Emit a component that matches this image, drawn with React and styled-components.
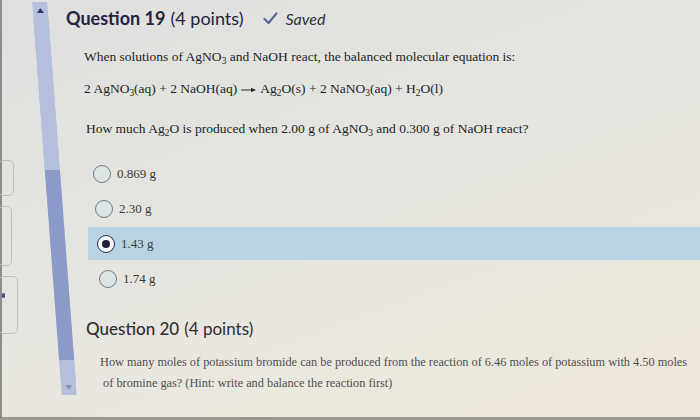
import React from "react";
import styled, { createGlobalStyle } from "styled-components";

const Global = createGlobalStyle`
  html, body { margin: 0; padding: 0; }
  body {
    width: 700px; height: 420px; overflow: hidden;
    background: linear-gradient(160deg, #dfe0de 0%, #e4e4e0 40%, #ebe8de 75%, #eee6da 100%);
    font-family: "Liberation Serif", "Times New Roman", serif;
  }
`;

const Page = styled.div`
  position: relative;
  display: flex;
  width: 700px;
  height: 420px;
  box-sizing: border-box;
  border-left: 2px solid #8c8c88;
  border-bottom: 3px solid #9a9690;
`;

const LeftRail = styled.div`
  width: 45px;
  flex: none;
  display: flex;
  flex-direction: column;
  gap: 10px;
  padding-top: 160px;
`;

const GhostBox = styled.div`
  width: ${(p) => p.w}px;
  height: ${(p) => p.h}px;
  margin-left: -4px;
  border: 1px solid #c0c0ba;
  border-radius: 5px;
  position: relative;
`;

const Dot = styled.span`
  position: absolute;
  left: 3px;
  top: 16px;
  width: 3px;
  height: 5px;
  border-radius: 2px;
  background: #3c4f9a;
`;

const Scrollbar = styled.div`
  width: 15px;
  flex: none;
  margin-top: 2px;
  height: 393px;
  transform: skewX(4.3deg);
  display: flex;
  flex-direction: column;
  background: #b6c0dd;
`;

const ArrowCell = styled.div`
  height: 16px;
  flex: none;
  display: flex;
  align-items: center;
  justify-content: center;
`;

const Track = styled.div`
  height: ${(p) => p.h}px;
  flex: none;
  background: ${(p) => p.c};
`;

const Content = styled.div`
  flex: 1;
  padding-left: 4px;
  padding-top: 5px;
  display: flex;
  flex-direction: column;
  color: #262626;
`;

const Header = styled.div`
  display: flex;
  align-items: center;
  height: 26px;
  font-family: Lato, "Open Sans", sans-serif;
  font-size: ${(p) => p.size}px;
  color: ${(p) => p.color};
  margin-left: ${(p) => p.indent || 0}px;
  margin-top: ${(p) => p.top || 0}px;
`;

const Strong = styled.span`
  font-weight: ${(p) => p.weight || 700};
  margin-right: 5px;
`;

const Light = styled.span`
  font-weight: 400;
`;

const Saved = styled.span`
  display: inline-flex;
  align-items: center;
  margin-left: 20px;
  font-size: 16px;
  font-style: italic;
  color: #2f3140;
  gap: 7px;
`;

const Para = styled.div`
  font-size: ${(p) => p.size || 13.5}px;
  line-height: ${(p) => p.lh || 20}px;
  margin-left: ${(p) => p.indent}px;
  margin-top: ${(p) => p.top}px;
  color: ${(p) => p.color || "#1e1e1e"};
`;

const Sub = styled.sub`
  font-size: 0.7em;
  line-height: 0;
  vertical-align: -0.3em;
`;

const Arrow = styled.svg`
  display: inline-block;
  vertical-align: middle;
  margin: 0 4px;
`;

const Options = styled.div`
  display: flex;
  flex-direction: column;
  gap: 2px;
  margin-top: 18px;
  margin-left: 22px;
`;

const Option = styled.div`
  display: flex;
  align-items: center;
  height: 33px;
  padding-left: ${(p) => 5 + p.shift}px;
  gap: 6px;
  background: ${(p) => (p.selected ? "#b9d3e3" : "transparent")};
  font-size: 13px;
  color: #3a3a3a;
`;

const Radio = styled.span`
  width: 16px;
  height: 16px;
  border-radius: 50%;
  border: 1.5px solid ${(p) => (p.checked ? "#2a3050" : "#6f7f86")};
  background: ${(p) => (p.checked ? "#f4f6f8" : "#dde4e4")};
  display: flex;
  align-items: center;
  justify-content: center;
  flex: none;
`;

const RadioDot = styled.span`
  width: 8px;
  height: 8px;
  border-radius: 50%;
  background: #1c2038;
`;

const options = ["0.869 g", "2.30 g", "1.43 g", "1.74 g"];

export default function App() {
  return (
    <>
      <Global />
      <Page>
        <LeftRail>
          <GhostBox w={14} h={34} />
          <GhostBox w={12} h={58} />
          <GhostBox w={18} h={56}>
            <Dot />
          </GhostBox>
        </LeftRail>
        <Scrollbar>
          <ArrowCell>
            <svg width="7" height="5" viewBox="0 0 7 5">
              <path d="M0 5 L3.5 0 L7 5 Z" fill="#2c3565" />
            </svg>
          </ArrowCell>
          <Track h={152} c="#b4bfdd" />
          <Track h={190} c="#8c9aca" />
          <Track h={19} c="#b4bfdd" />
          <ArrowCell>
            <svg width="7" height="5" viewBox="0 0 7 5">
              <path d="M0 0 L3.5 5 L7 0 Z" fill="#8a94b8" />
            </svg>
          </ArrowCell>
        </Scrollbar>
        <Content>
          <Header size={18} color="#23243f">
            <Strong weight={700}>Question 19</Strong>
            <Light>(4 points)</Light>
            <Saved>
              <svg width="15" height="13" viewBox="0 0 15 13">
                <path d="M1.5 7 L5.5 11 L13.5 1.5" fill="none" stroke="#56688f" strokeWidth="2.2" strokeLinecap="round" strokeLinejoin="round" />
              </svg>
              Saved
            </Saved>
          </Header>
          <Para indent={18} top={16}>
            When solutions of AgNO<Sub>3</Sub> and NaOH react, the balanced molecular equation is:
          </Para>
          <Para indent={18} top={12}>
            2 AgNO<Sub>3</Sub>(aq) + 2 NaOH(aq)
            <Arrow width="15" height="6" viewBox="0 0 15 6">
              <path d="M0 3 H12" stroke="#2a2a2a" strokeWidth="1" />
              <path d="M10 0.8 L15 3 L10 5.2 Z" fill="#2a2a2a" />
            </Arrow>
            Ag<Sub>2</Sub>O(s) + 2 NaNO<Sub>3</Sub>(aq) + H<Sub>2</Sub>O(l)
          </Para>
          <Para indent={20} top={20}>
            How much Ag<Sub>2</Sub>O is produced when 2.00 g of AgNO<Sub>3</Sub> and 0.300 g of NaOH react?
          </Para>
          <Options>
            {options.map((o, i) => (
              <Option key={o} selected={i === 2} shift={i * 2}>
                <Radio checked={i === 2}>{i === 2 && <RadioDot />}</Radio>
                {o}
              </Option>
            ))}
          </Options>
          <Header size={17} color="#2e2e33" indent={20} top={20}>
            <Strong weight={500}>Question 20</Strong>
            <Light>(4 points)</Light>
          </Header>
          <Para indent={34} top={11} size={12.3} lh={21} color="#4f4f52">
            How many moles of potassium bromide can be produced from the reaction of 6.46 moles of potassium with 4.50 moles
            <br />
            &nbsp;of bromine gas? (Hint: write and balance the reaction first)
          </Para>
        </Content>
      </Page>
    </>
  );
}
